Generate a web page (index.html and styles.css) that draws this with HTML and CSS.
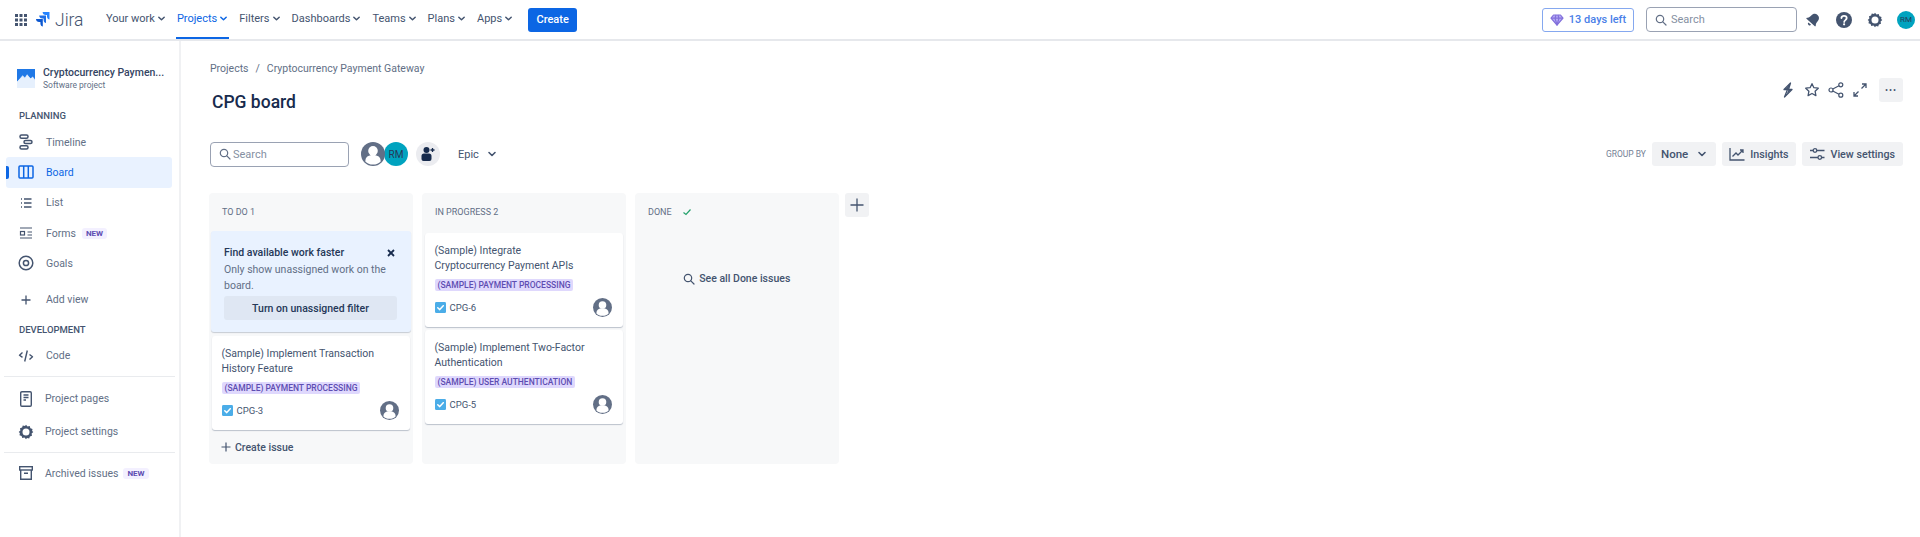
FILE: index.html
```html
<!DOCTYPE html>
<html lang="en">
<head>
  <meta charset="UTF-8">
  <meta name="viewport" content="width=device-width, initial-scale=1.0">
  <title>CPG board</title>
  <link rel="stylesheet" href="styles.css">
</head>
<body>
  <svg class="defs" width="0" height="0">
    <symbol id="chev" viewBox="0 0 10 10"><path d="M2 3.500 5 6.500 8 3.500" fill="none" stroke="currentColor" stroke-width="1.600" stroke-linecap="round" stroke-linejoin="round"/></symbol>
    <symbol id="person" viewBox="0 0 20 20"><circle cx="10" cy="10" r="10" fill="#626f86"/><circle cx="10" cy="7.400" r="4" fill="#fff"/><path d="M3.600 16.200c0-3.700 2.300-5.400 6.400-5.400s6.400 1.700 6.400 5.400c-1.400 1.700-3.800 2.600-6.400 2.600s-5-.9-6.400-2.600z" fill="#fff"/></symbol>
    <symbol id="check" viewBox="0 0 12 12"><rect width="12" height="12" rx="1.500" fill="#4bade8"/><path d="M3 6.200 5.200 8.300 9 4" fill="none" stroke="#fff" stroke-width="1.600" stroke-linecap="round" stroke-linejoin="round"/></symbol>
    <symbol id="lens" viewBox="0 0 12 12"><circle cx="5" cy="5" r="3.700" fill="none" stroke="currentColor" stroke-width="1.200"/><path d="M7.800 7.800 11 11" stroke="currentColor" stroke-width="1.200" stroke-linecap="round"/></symbol>
    <symbol id="gear" viewBox="0 0 16 16"><path d="M8 .8l1.500 1.700 2.200-.4.700 2.100 2.100.7-.4 2.200L15.300 8l-1.700 1.500.4 2.200-2.100.7-.7 2.100-2.200-.4L8 15.300l-1.500-1.700-2.200.4-.7-2.100-2.100-.7.4-2.200L.7 8 2.400 6.500 2 4.300l2.100-.7.7-2.100 2.200.4z" fill="#44546f"/><circle cx="8" cy="8" r="3.500" fill="#fff"/></symbol>
  </svg>

  <header class="topbar">
    <svg class="apps" width="12" height="12" viewBox="0 0 12 12" fill="#44546f"><rect width="3" height="3"/><rect x="4.500" width="3" height="3"/><rect x="9" width="3" height="3"/><rect y="4.500" width="3" height="3"/><rect x="4.500" y="4.500" width="3" height="3"/><rect x="9" y="4.500" width="3" height="3"/><rect y="9" width="3" height="3"/><rect x="4.500" y="9" width="3" height="3"/><rect x="9" y="9" width="3" height="3"/></svg>
    <div class="logo">
      <svg width="14" height="15" viewBox="0 0 14 15"><path d="M13.500 0H6.600c0 1.700 1.400 3.100 3.100 3.100H11v1.300c0 1.700 1.400 3.100 2.500 3.100z" fill="#2684ff"/><path d="M10 3.500H3.200c0 1.700 1.400 3.100 3.100 3.100h1.300v1.300c0 1.700 1.300 3.100 2.400 3.100z" fill="#1f6fe5"/><path d="M6.800 7H0c0 1.700 1.400 3.100 3.100 3.100h1.300v1.300c0 1.700 1.300 3.100 2.400 3.100z" fill="#0c57d0"/></svg>
      <span>Jira</span>
    </div>
    <nav class="topnav">
      <a class="topnav-item">Your work <svg><use href="#chev"/></svg></a>
      <a class="topnav-item is-active">Projects <svg><use href="#chev"/></svg></a>
      <a class="topnav-item">Filters <svg><use href="#chev"/></svg></a>
      <a class="topnav-item">Dashboards <svg><use href="#chev"/></svg></a>
      <a class="topnav-item">Teams <svg><use href="#chev"/></svg></a>
      <a class="topnav-item">Plans <svg><use href="#chev"/></svg></a>
      <a class="topnav-item">Apps <svg><use href="#chev"/></svg></a>
    </nav>
    <button class="create">Create</button>
    <div class="topbar-right">
      <button class="trial">
        <svg width="14" height="12" viewBox="0 0 14 12" fill="none" stroke="#8270db" stroke-width="1.200" stroke-linejoin="round"><path d="M3.500 1h7L13 4.200 7 11 1 4.200z" fill="#b8acf6"/><path d="M1 4.200h12M5 4.200 7 11l2-6.800M5 4.200 6 1M9 4.200 8 1"/></svg>
        13 days left
      </button>
      <div class="search top-search">
        <svg width="12" height="12"><use href="#lens"/></svg>
        <span>Search</span>
      </div>
      <svg class="top-icon" width="16" height="16" viewBox="0 0 16 16" fill="#44546f"><g transform="rotate(42 8 8)"><path d="M8 1.200c2.700 0 4.300 2 4.300 4.600 0 2.300.6 3.600 1.700 4.700v1H2v-1c1.100-1.100 1.700-2.400 1.700-4.700C3.700 3.200 5.300 1.200 8 1.200z"/><path d="M6.200 12.900h3.600a1.800 1.800 0 0 1-3.600 0z"/></g></svg>
      <svg class="top-icon" width="18" height="18" viewBox="0 0 18 18"><circle cx="9" cy="9" r="8" fill="#44546f"/><path d="M6.400 7c.2-1.400 1.200-2.100 2.600-2.100s2.700.9 2.700 2.200c0 2-2.500 2-2.500 3.800" fill="none" stroke="#fff" stroke-width="1.800" stroke-linecap="round"/><circle cx="9.100" cy="13.300" r="1.100" fill="#fff"/></svg>
      <svg class="top-icon" width="16" height="16"><use href="#gear"/></svg>
      <span class="avatar avatar-small">RM</span>
    </div>
  </header>

  <div class="layout">
    <aside class="sidebar">
      <div class="project">
        <svg width="18" height="19" viewBox="0 0 16 18" preserveAspectRatio="none"><rect width="16" height="18" fill="#cfe1fb"/><path d="M0 0h16v10l-2-3-2 2-3-4-2 3-2-2-5 6z" fill="#1f78e6"/><path d="M0 12l5-5 2 2 2-3 3 3 2-1 2 3v7H0z" fill="#e6f0fd"/></svg>
        <div>
          <div class="project-name">Cryptocurrency Paymen...</div>
          <div class="project-type">Software project</div>
        </div>
      </div>
      <h4 class="nav-title">PLANNING</h4>
      <a class="nav-item">
        <svg width="16" height="16" viewBox="0 0 16 16" fill="none" stroke="#44546f" stroke-width="1.500"><rect x="2" y="1" width="8" height="3.200" rx="1.500"/><rect x="6" y="6.400" width="8" height="3.200" rx="1.500"/><rect x="2" y="11.800" width="8" height="3.200" rx="1.500"/></svg>
        Timeline
      </a>
      <a class="nav-item is-active">
        <svg width="16" height="16" viewBox="0 0 16 16" fill="none" stroke="#0c66e4" stroke-width="1.500"><rect x="1" y="2" width="14" height="12" rx="1"/><path d="M5.700 2v12M10.300 2v12"/></svg>
        Board
      </a>
      <a class="nav-item">
        <svg width="16" height="16" viewBox="0 0 16 16" fill="none" stroke="#44546f" stroke-width="1.300"><path d="M6 4h7.500M6 8h7.500M6 12h7.500"/><path d="M3 4h1M3 8h1M3 12h1" stroke-width="1.500"/></svg>
        List
      </a>
      <a class="nav-item">
        <svg width="16" height="16" viewBox="0 0 16 16" fill="none" stroke="#44546f" stroke-width="1.200"><path d="M2 3h12M2 13h12M9.500 7h4.500M9.500 10h4.500"/><rect x="2.500" y="6.500" width="4" height="3.500"/></svg>
        Forms <span class="new">NEW</span>
      </a>
      <a class="nav-item">
        <svg width="16" height="16" viewBox="0 0 16 16" fill="none" stroke="#44546f" stroke-width="1.500"><circle cx="8" cy="8" r="6.800"/><circle cx="8" cy="8" r="2.600"/></svg>
        Goals
      </a>
      <a class="nav-item add-view">
        <svg width="16" height="16" viewBox="0 0 16 16" stroke="#44546f" stroke-width="1.300"><path d="M8 3.500v9M3.500 8h9"/></svg>
        Add view
      </a>
      <h4 class="nav-title nav-title-dev">DEVELOPMENT</h4>
      <a class="nav-item">
        <svg width="16" height="16" viewBox="0 0 16 16" fill="none" stroke="#44546f" stroke-width="1.400" stroke-linejoin="round"><path d="M4.500 4.500 1.500 7.200l3 2.200M11.500 6.500l3 2.300-3 2.700M9.300 2.500 6.700 13.500"/></svg>
        Code
      </a>
      <div class="nav-divider first"></div>
      <a class="nav-item nav-item-tall">
        <svg width="16" height="16" viewBox="0 0 16 16" fill="none" stroke="#44546f" stroke-width="1.400"><rect x="2.700" y=".7" width="10.600" height="14.600" rx="1.200"/><path d="M5.500 4h5M5.500 6.500h5M5.500 9h2.500"/></svg>
        Project pages
      </a>
      <a class="nav-item nav-item-tall settings">
        <svg width="16" height="16"><use href="#gear"/></svg>
        Project settings
      </a>
      <div class="nav-divider"></div>
      <a class="nav-item archived">
        <svg width="16" height="16" viewBox="0 0 16 16" fill="none" stroke="#44546f" stroke-width="1.400"><rect x="1.700" y="1.700" width="12.600" height="3.300"/><path d="M2.700 5v9.300h10.600V5M6 8.300h4"/></svg>
        Archived issues <span class="new">NEW</span>
      </a>
    </aside>

    <main class="content">
      <div class="page-head">
        <div>
          <div class="breadcrumb">Projects<span class="sep">/</span>Cryptocurrency Payment Gateway</div>
          <h1 class="title">CPG board</h1>
        </div>
        <div class="actions">
          <svg width="16" height="16" viewBox="0 0 16 16" fill="#44546f"><path d="M10.500 1 4 7.500h3.500L4.500 15l7.500-7.500H8.500z" fill="none" stroke="#44546f" stroke-width="1.300" stroke-linejoin="round"/><path d="M9.500 2.500 5 7.500h3.500l-2 5 5-5H8.500z"/></svg>
          <svg width="16" height="16" viewBox="0 0 16 16" fill="none" stroke="#44546f" stroke-width="1.300" stroke-linejoin="round"><path d="M8 1.700l1.900 4 4.400.5-3.200 3 .8 4.400L8 11.500l-3.900 2.100.8-4.400-3.200-3 4.400-.5z"/></svg>
          <svg width="16" height="16" viewBox="0 0 16 16" fill="none" stroke="#44546f" stroke-width="1.200"><circle cx="3" cy="8" r="2"/><circle cx="12.800" cy="2.800" r="2"/><circle cx="12.800" cy="13.200" r="2"/><path d="M4.800 7 11 3.800M4.800 9 11 12.200"/></svg>
          <svg width="16" height="16" viewBox="0 0 16 16" fill="none" stroke="#44546f" stroke-width="1.300"><path d="M9.500 6.500 14 2M10 2h4v4M6.500 9.500 2 14M2 10v4h4"/></svg>
          <button class="more">&bull;&bull;&bull;</button>
        </div>
      </div>

      <div class="toolbar">
        <div class="search board-search">
          <svg width="12" height="12"><use href="#lens"/></svg>
          <span>Search</span>
        </div>
        <div class="avatars">
          <svg class="avatar-person" width="24" height="24"><use href="#person"/></svg>
          <span class="avatar avatar-large">RM</span>
        </div>
        <span class="add-person">
          <svg width="16" height="16" viewBox="0 0 16 16" fill="#172b4d"><circle cx="6.500" cy="4" r="3"/><path d="M1.500 10a2.500 2.500 0 0 1 2.500-2.500h5a2.500 2.500 0 0 1 2.500 2.500v3a2 2 0 0 1-2 2h-6a2 2 0 0 1-2-2z"/><path d="M12.500 2v4M10.500 4h4" stroke="#172b4d" stroke-width="1.300"/></svg>
        </span>
        <span class="epic">Epic <svg width="10" height="10"><use href="#chev"/></svg></span>
        <span class="group-label">GROUP BY</span>
        <button class="tool-btn none-btn">None <svg width="10" height="10"><use href="#chev"/></svg></button>
        <button class="tool-btn">
          <svg width="16" height="14" viewBox="0 0 16 14" fill="none" stroke="#44546f" stroke-width="1.300"><path d="M1 1v12h14.500"/><path d="M3.500 9.500 7 6l2 2 4.500-4.500M11 3h3v3"/></svg>
          Insights
        </button>
        <button class="tool-btn">
          <svg width="16" height="14" viewBox="0 0 16 14" fill="none" stroke="#44546f" stroke-width="1.300"><path d="M1 3.500h3M8 3.500h7.500M1 10.500h8M12.500 10.500h3"/><circle cx="6" cy="3.500" r="1.800"/><circle cx="10.800" cy="10.500" r="1.800"/></svg>
          View settings
        </button>
      </div>

      <div class="board">
        <section class="column">
          <h3 class="column-title">TO DO 1</h3>
          <div class="promo">
            <div class="promo-head">
              <strong>Find available work faster</strong>
              <svg width="10" height="10" viewBox="0 0 10 10" stroke="#172b4d" stroke-width="1.800"><path d="M2 2l6 6M8 2l-6 6"/></svg>
            </div>
            <p>Only show unassigned work on the board.</p>
            <button class="promo-btn">Turn on unassigned filter</button>
          </div>
          <article class="card card-todo">
            <p class="card-title">(Sample) Implement Transaction History Feature</p>
            <span class="epic-tag">(SAMPLE) PAYMENT PROCESSING</span>
            <div class="card-foot">
              <svg width="11" height="11"><use href="#check"/></svg>
              <span class="key">CPG-3</span>
              <svg class="card-person" width="19" height="19"><use href="#person"/></svg>
            </div>
          </article>
          <div class="create-issue">
            <svg width="12" height="12" viewBox="0 0 12 12" stroke="#44546f" stroke-width="1.200"><path d="M6 1.500v9M1.500 6h9"/></svg>
            Create issue
          </div>
        </section>

        <section class="column">
          <h3 class="column-title">IN PROGRESS 2</h3>
          <article class="card card-first">
            <p class="card-title">(Sample) Integrate<br>Cryptocurrency Payment APIs</p>
            <span class="epic-tag">(SAMPLE) PAYMENT PROCESSING</span>
            <div class="card-foot">
              <svg width="11" height="11"><use href="#check"/></svg>
              <span class="key">CPG-6</span>
              <svg class="card-person" width="19" height="19"><use href="#person"/></svg>
            </div>
          </article>
          <article class="card">
            <p class="card-title">(Sample) Implement Two-Factor Authentication</p>
            <span class="epic-tag">(SAMPLE) USER AUTHENTICATION</span>
            <div class="card-foot">
              <svg width="11" height="11"><use href="#check"/></svg>
              <span class="key">CPG-5</span>
              <svg class="card-person" width="19" height="19"><use href="#person"/></svg>
            </div>
          </article>
        </section>

        <section class="column">
          <h3 class="column-title">DONE <svg class="done-check" width="10" height="10" viewBox="0 0 10 10" fill="none" stroke="#22a06b" stroke-width="1.200"><path d="M1.500 5.500 4 7.500 8.500 2.500"/></svg></h3>
          <div class="see-done">
            <svg width="12" height="12"><use href="#lens"/></svg>
            See all Done issues
          </div>
        </section>

        <button class="add-column">
          <svg width="16" height="16" viewBox="0 0 16 16" stroke="#44546f" stroke-width="1.300"><path d="M8 1.500v13M1.500 8h13"/></svg>
        </button>
      </div>
    </main>
  </div>
</body>
</html>
```

FILE: styles.css
```css
* {
  box-sizing: border-box;
}
body {
  margin: 0;
  height: 537px;
  overflow: hidden;
  font-family: Roboto, "Noto Sans", sans-serif;
  font-size: 10.500px;
  color: #44546f;
  background: #fff;
}
button {
  font-family: inherit;
  border: none;
  cursor: pointer;
}
svg {
  flex: none;
}
.defs {
  position: absolute;
}

/* top bar */
.topbar {
  display: flex;
  align-items: center;
  height: 41px;
  padding-left: 15px;
  border-bottom: 2px solid #e6e8ec;
}
.logo {
  display: flex;
  align-items: center;
  width: 69px;
  margin-left: 9px;
  gap: 5px;
  font-size: 17.500px;
  font-weight: 300;
  color: #44546f;
}
.topnav {
  display: flex;
  height: 39px;
}
.topnav-item {
  display: flex;
  align-items: center;
  gap: 2px;
  padding: 0 1px;
  margin-right: 9px;
  font-size: 11px;
  white-space: nowrap;
  color: #44546f;
  border-bottom: 2px solid transparent;
}
.topnav-item svg {
  width: 9px;
  height: 9px;
}
.topnav-item.is-active {
  color: #0c66e4;
  border-bottom-color: #0c66e4;
}
.create {
  height: 24px;
  width: 49px;
  margin-left: 5px;
  padding: 0;
  border-radius: 3px;
  background: #0c66e4;
  color: #fff;
  font-size: 11px;
  font-weight: 500;
}
.topbar-right {
  display: flex;
  align-items: center;
  margin-left: auto;
  padding-right: 5px;
}
.trial {
  display: flex;
  align-items: center;
  justify-content: center;
  gap: 5px;
  width: 92px;
  height: 24px;
  padding: 0;
  background: #fff;
  border: 1px solid #85a8ef;
  border-radius: 3px;
  color: #4a7fe8;
  font-size: 11px;
  font-weight: 500;
  white-space: nowrap;
}
.search {
  display: flex;
  align-items: center;
  gap: 4px;
  height: 25px;
  padding-left: 8px;
  background: #fff;
  border: 1px solid #9aa2b3;
  border-radius: 4px;
  color: #626f86;
}
.search span {
  color: #8590a2;
  font-size: 11px;
}
.top-search {
  width: 151px;
  margin: 0 8px 0 12px;
}
.top-icon {
  margin-right: 14px;
}
.avatar {
  display: flex;
  align-items: center;
  justify-content: center;
  border-radius: 50%;
  background: #00a3bf;
  color: #253858;
}
.avatar-small {
  width: 18px;
  height: 18px;
  font-size: 8px;
}

/* left navigation */
.layout {
  display: flex;
  height: 496px;
}
.sidebar {
  width: 181px;
  flex: none;
  padding: 25px 7px 0 6px;
  border-right: 2px solid #f0f1f3;
}
.project {
  display: flex;
  align-items: center;
  gap: 8px;
  padding-left: 11px;
}
.project-name {
  font-size: 10.500px;
  font-weight: 500;
  line-height: 13px;
  white-space: nowrap;
  color: #344563;
}
.project-type {
  font-size: 8.500px;
  line-height: 12px;
  color: #626f86;
}
.nav-title {
  margin: 18px 0 4px 13px;
  font-size: 9.500px;
  font-weight: 500;
  line-height: 14px;
  color: #44546f;
}
.nav-item {
  position: relative;
  display: flex;
  align-items: center;
  gap: 12px;
  height: 30.300px;
  padding-left: 12px;
  color: #626f86;
  font-size: 10.500px;
}
.nav-item.is-active {
  background: #e9f2ff;
  border-radius: 3px;
  color: #0c66e4;
}
.nav-item.is-active::before {
  content: "";
  position: absolute;
  left: 0;
  top: 9px;
  width: 3px;
  height: 13px;
  background: #0c66e4;
  border-radius: 0 2px 2px 0;
}
.new {
  margin-left: -6px;
  padding: 1px 4px;
  background: #f3f0ff;
  border-radius: 3px;
  color: #5e4db2;
  font-size: 8px;
  font-weight: 700;
}
.add-view {
  margin-top: 6px;
}
.nav-title-dev {
  margin-top: 8px;
}
.nav-divider {
  height: 1px;
  margin: 4px -3px 0 -2px;
  background: #e9ebee;
}
.nav-divider.first {
  margin-top: 5px;
}
.nav-item-tall {
  height: 33px;
  gap: 11px;
}
.nav-divider.first + .nav-item-tall {
  margin-top: 5px;
}
.archived {
  margin-top: 5px;
  gap: 11px;
}

/* main */
.content {
  flex: 1;
  padding: 20px 17px 0 29px;
}
.page-head {
  display: flex;
  justify-content: space-between;
}
.breadcrumb {
  font-size: 10.500px;
  line-height: 16px;
  color: #626f86;
}
.sep {
  margin: 0 7px;
}
.title {
  margin: 12px 0 0 2px;
  font-size: 17.500px;
  font-weight: 500;
  line-height: 26px;
  color: #172b4d;
}
.actions {
  display: flex;
  align-items: center;
  gap: 8px;
  height: 24px;
  margin-top: 17px;
}
.more {
  width: 24px;
  height: 24px;
  margin-left: 3px;
  padding: 0;
  background: #f1f2f4;
  border-radius: 3px;
  color: #44546f;
  font-size: 9px;
  letter-spacing: 1px;
}

.toolbar {
  display: flex;
  align-items: center;
  height: 26px;
  margin-top: 26px;
}
.board-search {
  width: 139px;
  gap: 2px;
}
.avatars {
  display: flex;
  margin-left: 12px;
}
.avatar-person {
  position: relative;
  z-index: 1;
}
.avatar-large {
  width: 24px;
  height: 24px;
  margin-left: -1px;
  font-size: 10px;
}
.add-person {
  display: flex;
  align-items: center;
  justify-content: center;
  width: 24px;
  height: 24px;
  margin-left: 8px;
  border-radius: 50%;
  background: #ebecf0;
}
.epic {
  display: flex;
  align-items: center;
  gap: 8px;
  margin-left: 18px;
  font-size: 11px;
  color: #44546f;
}
.group-label {
  margin-left: auto;
  margin-right: 6px;
  font-size: 8.500px;
  color: #758195;
}
.tool-btn {
  display: flex;
  align-items: center;
  gap: 5px;
  height: 24px;
  margin-left: 6px;
  padding: 0 8px 0 7px;
  background: #f1f2f4;
  border-radius: 3px;
  color: #44546f;
  font-size: 10.700px;
  font-weight: 500;
}
.none-btn {
  margin-left: 0;
  gap: 9px;
  padding: 0 9px;
  font-size: 11.500px;
}

/* board */
.board {
  display: flex;
  align-items: flex-start;
  gap: 9.500px;
  margin: 26px 0 0 -1px;
}
.column {
  width: 203.500px;
  height: 271px;
  padding: 0 2px;
  background: #f7f8f9;
  border-radius: 4px;
}
.column-title {
  display: flex;
  align-items: center;
  gap: 10px;
  height: 38px;
  margin: 0;
  padding-left: 11px;
  font-size: 9px;
  font-weight: 400;
  color: #626f86;
}
.promo {
  height: 101px;
  padding: 15px 12px 0 13px;
  background: #e9f2ff;
  border-radius: 3px;
  box-shadow: 0 1px 1px rgba(9, 30, 66, 0.2);
  font-size: 10.500px;
  color: #626f86;
}
.promo-head {
  display: flex;
  align-items: center;
  justify-content: space-between;
  padding-right: 3px;
}
.promo-head strong {
  font-size: 10.500px;
  font-weight: 500;
  color: #253858;
}
.promo p {
  margin: 3px 0 3px;
  line-height: 15.500px;
}
.promo-btn {
  width: 173px;
  height: 24px;
  padding: 0;
  background: #dfe7f3;
  border-radius: 3px;
  color: #253858;
  font-size: 10.500px;
  font-weight: 500;
}
.card {
  height: 94px;
  margin: 0 1px 3px;
  padding: 10px 11px 0 9.500px;
  background: #fff;
  border-radius: 3px;
  box-shadow: 0 1px 1px rgba(9, 30, 66, 0.25);
}
.card-first {
  margin-top: 2px;
}
.card-todo {
  margin-top: 4px;
}
.card-title {
  margin: 0 0 5px;
  font-size: 10.500px;
  line-height: 15px;
  color: #44546f;
}
.epic-tag {
  display: inline-block;
  height: 12px;
  padding: 0 3px;
  background: #dfd8fd;
  border-radius: 2px;
  color: #5e4db2;
  font-size: 8.500px;
  font-weight: 500;
  line-height: 12px;
  white-space: nowrap;
}
.card-foot {
  display: flex;
  align-items: center;
  gap: 4px;
  height: 19px;
  margin-top: 7px;
}
.key {
  font-size: 9.500px;
  color: #44546f;
}
.card-person {
  margin-left: auto;
}
.create-issue {
  display: flex;
  align-items: center;
  gap: 3px;
  height: 28px;
  padding-left: 9px;
  font-size: 10.500px;
  font-weight: 500;
  color: #44546f;
}
.see-done {
  display: flex;
  align-items: center;
  justify-content: center;
  gap: 4px;
  margin-top: 41px;
  font-size: 10.500px;
  font-weight: 500;
  color: #44546f;
}
.add-column {
  display: flex;
  align-items: center;
  justify-content: center;
  width: 24px;
  height: 24px;
  margin-left: -3px;
  padding: 0;
  background: #f1f2f4;
  border-radius: 3px;
}
```
